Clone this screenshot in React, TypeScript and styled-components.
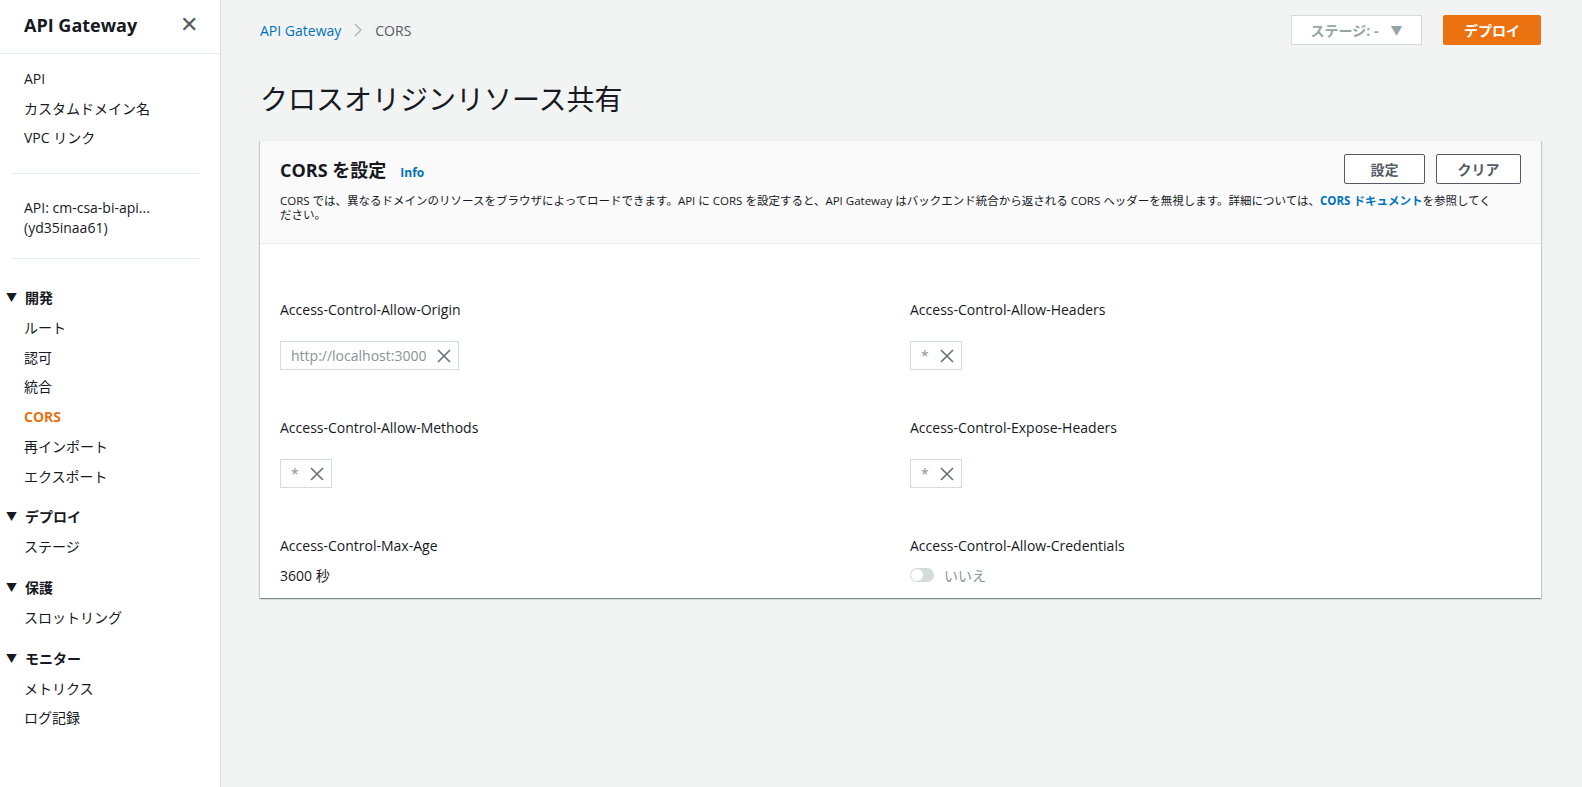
import React from "react";
import styled, { createGlobalStyle } from "styled-components";

const Global = createGlobalStyle`
  html, body { margin: 0; padding: 0; background: #f2f3f3; overflow: hidden; }
  body { font-family: "Open Sans", "Noto Sans CJK JP", sans-serif; color: #16191f; font-size: 14px; }
`;

const Layout = styled.div`display: flex; height: 787px; width: 1582px;`;
const Side = styled.nav`
  width: 220px; flex: none; background: #fff; border-right: 1px solid #d5dbdb;
`;
const SideHead = styled.div`
  height: 54px; border-bottom: 1px solid #eaeded; display: flex; align-items: center;
  justify-content: space-between; padding: 0 22px 0 24px; box-sizing: border-box;
`;
const SideTitle = styled.div`font-size: 18px; font-weight: 700; margin-top: -4px;`;
const Close = styled.span`font-size: 22px; color: #545b64; margin-top: -8px; font-weight: 300;`;
const SideList = styled.div`padding: 10px 0 0;`;
const Item = styled.div<{ $active?: boolean }>`
  padding: 0 24px; height: 29.7px; line-height: 30px; font-size: 14px;
  color: ${p => (p.$active ? "#ec7211" : "#16191f")}; font-weight: ${p => (p.$active ? 700 : 400)};
`;
const Sep = styled.div`height: 1px; background: #eaeded; margin: 20px 20px 24px 12px;`;
const ApiName = styled.div`padding: 0 24px; line-height: 20px; font-size: 14px;`;
const Section = styled.div<{ $first?: boolean }>`
  padding: 0 6px; height: 30px; line-height: 30px; font-weight: 700; margin-top: ${p => (p.$first ? 20 : 11)}px;
  display: flex; gap: 8px; align-items: center;
`;
const Tri = styled.span`font-size: 11px;`;

const Main = styled.main`flex: 1; padding: 0 41px 0 39px;`;
const Top = styled.div`display: flex; align-items: center; height: 60px;`;
const Crumb = styled.div`flex: 1; font-size: 14px; color: #545b64; display: flex; gap: 10px; align-items: center;`;
const Link = styled.span`color: #0073bb;`;
const StageBtn = styled.div`
  width: 131px; height: 30px; box-sizing: border-box; border: 1px solid #d5dbdb; background: #fff;
  color: #95a5a6; font-weight: 700; display: flex; align-items: center; justify-content: center; gap: 12px;
`;
const Deploy = styled.div`
  width: 98px; height: 30px; margin-left: 21px; background: #ec7211; color: #fff; font-weight: 700;
  display: flex; align-items: center; justify-content: center; border-radius: 2px;
`;
const H1 = styled.h1`font-size: 28px; font-weight: 400; margin: 19px 0 0; line-height: 40px;`;
const Card = styled.section`
  margin-top: 21px; background: #fff; box-shadow: 0 1px 1px rgba(0,28,36,.3), 1px 1px 1px rgba(0,28,36,.15), -1px 1px 1px rgba(0,28,36,.15);
  border-top: 1px solid #eaeded;
`;
const CardHead = styled.div`background: #fafafa; border-bottom: 1px solid #eaeded; padding: 13px 20px 21px;`;
const HeadRow = styled.div`display: flex; align-items: center; justify-content: space-between;`;
const CardTitle = styled.div`font-size: 18px; font-weight: 700; display: flex; align-items: baseline; gap: 14px;`;
const Info = styled.span`font-size: 12px; color: #0073bb; font-weight: 700;`;
const Btns = styled.div`display: flex; gap: 11px;`;
const Btn = styled.div<{ $w: number }>`
  width: ${p => p.$w}px; height: 30px; box-sizing: border-box; border: 1px solid #545b64; border-radius: 2px;
  display: flex; align-items: center; justify-content: center; font-weight: 700; color: #545b64; background: #fff;
`;
const Desc = styled.p`font-size: 11.5px; line-height: 14px; margin: 10px 0 0; padding-right: 30px; color: #16191f;`;
const DocLink = styled.span`color: #0073bb; font-weight: 700;`;
const Body = styled.div`display: grid; grid-template-columns: 630px 1fr; padding: 56px 20px 0;`;
const Field = styled.div`height: 118px;`;
const LastField = styled.div`height: 62px;`;
const Label = styled.div`font-size: 14px; line-height: 20px; margin-bottom: 21px;`;
const ValueLabel = styled(Label)`margin-bottom: 9px;`;
const Token = styled.div`
  display: inline-flex; align-items: center; gap: 10px; height: 29px; box-sizing: border-box;
  border: 1px solid #d5dbdb; padding: 0 6px 0 10px; color: #879596; font-size: 14px;
`;
const Value = styled.div`font-size: 14px;`;
const ToggleRow = styled.div`display: flex; align-items: center; gap: 10px; color: #879596;`;
const Toggle = styled.div`
  width: 24px; height: 14px; border-radius: 7px; background: #d5dbdb; position: relative;
  &::after { content: ""; position: absolute; left: 1px; top: 1px; width: 12px; height: 12px; border-radius: 50%; background: #fff; }
`;

const X = () => (
  <svg width="16" height="16" viewBox="0 0 16 16"><path d="M2 2l12 12M14 2L2 14" stroke="#687078" strokeWidth="1.6" fill="none" /></svg>
);

const Tk = ({ v }: { v: string }) => (<Token>{v}<X /></Token>);

export default function App() {
  return (
    <Layout>
      <Global />
      <Side>
        <SideHead><SideTitle>API Gateway</SideTitle><Close>✕</Close></SideHead>
        <SideList>
          <Item>API</Item><Item>カスタムドメイン名</Item><Item>VPC リンク</Item>
          <Sep />
          <ApiName>API: cm-csa-bi-api...<br />(yd35inaa61)</ApiName>
          <Sep />
          <Section $first><Tri>▼</Tri>開発</Section>
          <Item>ルート</Item><Item>認可</Item><Item>統合</Item><Item $active>CORS</Item><Item>再インポート</Item><Item>エクスポート</Item>
          <Section><Tri>▼</Tri>デプロイ</Section>
          <Item>ステージ</Item>
          <Section><Tri>▼</Tri>保護</Section>
          <Item>スロットリング</Item>
          <Section><Tri>▼</Tri>モニター</Section>
          <Item>メトリクス</Item><Item>ログ記録</Item>
        </SideList>
      </Side>
      <Main>
        <Top>
          <Crumb><Link>API Gateway</Link>
            <svg width="14" height="14" viewBox="0 0 14 14"><path d="M4 1l6 6-6 6" stroke="#aab7b8" strokeWidth="1.4" fill="none" /></svg>
            CORS</Crumb>
          <StageBtn>ステージ: - <span style={{ fontSize: 12 }}>▼</span></StageBtn>
          <Deploy>デプロイ</Deploy>
        </Top>
        <H1>クロスオリジンリソース共有</H1>
        <Card>
          <CardHead>
            <HeadRow>
              <CardTitle>CORS を設定<Info>Info</Info></CardTitle>
              <Btns><Btn $w={81}>設定</Btn><Btn $w={85}>クリア</Btn></Btns>
            </HeadRow>
            <Desc>CORS では、異なるドメインのリソースをブラウザによってロードできます。API に CORS を設定すると、API Gateway はバックエンド統合から返される CORS ヘッダーを無視します。詳細については、<DocLink>CORS ドキュメント</DocLink>を参照してください。</Desc>
          </CardHead>
          <Body>
            <Field><Label>Access-Control-Allow-Origin</Label><Tk v="http://localhost:3000" /></Field>
            <Field><Label>Access-Control-Allow-Headers</Label><Tk v="*" /></Field>
            <Field><Label>Access-Control-Allow-Methods</Label><Tk v="*" /></Field>
            <Field><Label>Access-Control-Expose-Headers</Label><Tk v="*" /></Field>
            <LastField><ValueLabel>Access-Control-Max-Age</ValueLabel><Value>3600 秒</Value></LastField>
            <LastField><ValueLabel>Access-Control-Allow-Credentials</ValueLabel><ToggleRow><Toggle />いいえ</ToggleRow></LastField>
          </Body>
        </Card>
      </Main>
    </Layout>
  );
}
